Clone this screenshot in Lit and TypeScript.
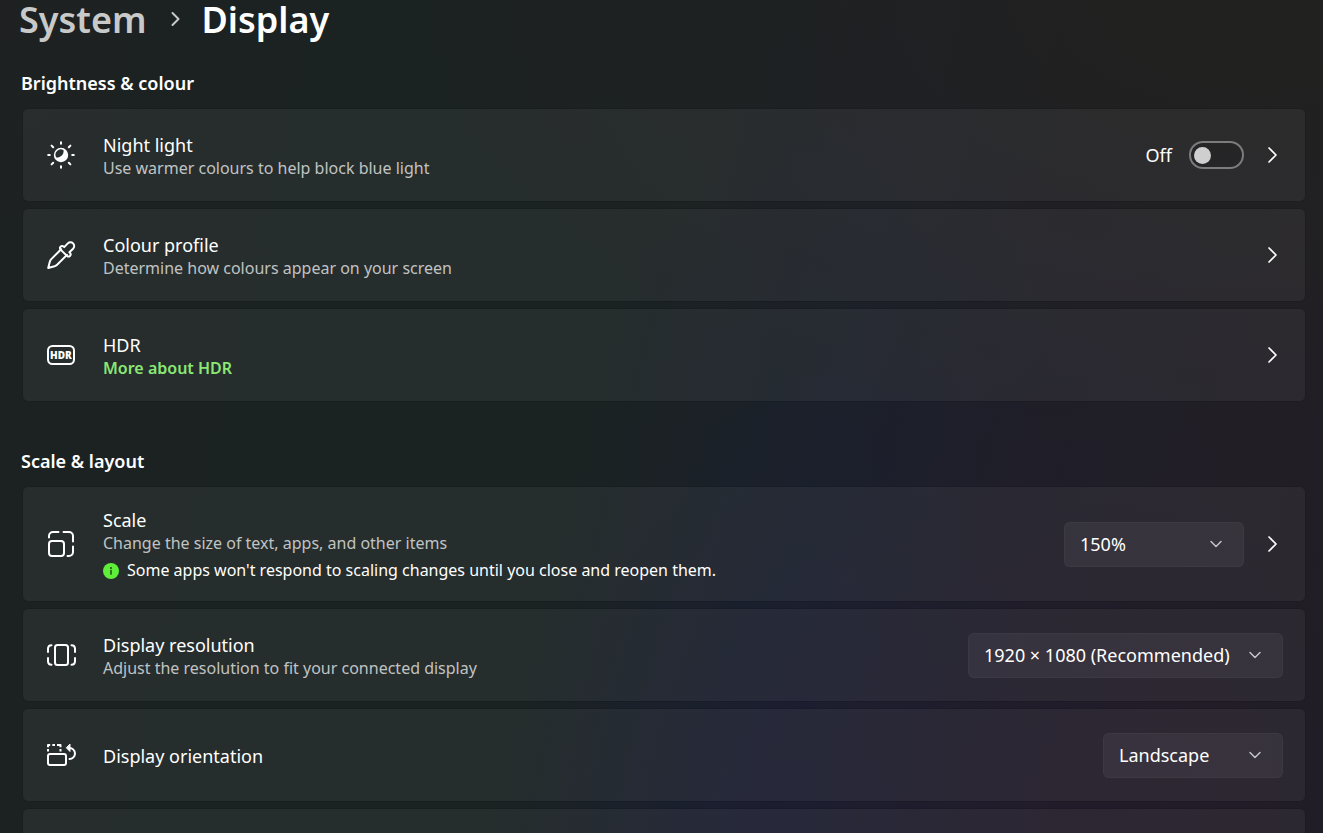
import { LitElement, html, svg, css, nothing } from "lit";
import { customElement, property, state } from "lit/decorators.js";

const icons = {
  night: svg`
    <g stroke="currentColor" stroke-width="2" stroke-linecap="round" fill="none">
      <path d="M15 2.200v1.600M15 26.200v1.600M2.200 15h1.600M26.200 15h1.600M5.600 5.600l1.600 1.600M22.800 22.800l1.600 1.600M5.600 24.400l1.600-1.600M22.800 7.200l1.600-1.600"/>
    </g>
    <circle cx="15" cy="15" r="7.200" fill="currentColor"/>
    <path fill="#27302f" d="M10.300 17.600a5.300 5.300 0 0 1 7.300-7.300c.4 4.400-3 7.500-7.300 7.300z"/>`,
  dropper: svg`
    <g stroke="currentColor" stroke-width="2" stroke-linejoin="round" stroke-linecap="round" fill="none">
      <path d="M15.200 9.200 5.300 19.100c-.7.700-1.200 1.600-1.500 2.600L2.200 28l6.300-1.700c1-.3 1.900-.8 2.600-1.500L21 14.900"/>
      <path d="M14.600 6.600c.9-.9 2.200-.9 3 0l.6.500 3.600-3.700a3.700 3.700 0 0 1 5.300 5.300l-3.700 3.600.6.600c.8.900.8 2.100 0 3-.9.800-2.100.8-3 0l-6.400-6.300c-.8-.9-.8-2.100 0-3z"/>
    </g>`,
  hdr: svg`
    <rect x="2" y="6" width="26" height="18" rx="4.500" fill="none" stroke="currentColor" stroke-width="2"/>
    <text x="15" y="18.700" text-anchor="middle" font-size="10" font-weight="900" fill="currentColor">HDR</text>`,
  scale: svg`
    <g stroke="currentColor" stroke-width="2" stroke-linecap="round" fill="none">
      <rect x="3" y="12" width="15" height="15" rx="3"/>
      <path d="M3 8.500V7a4 4 0 0 1 4-4h5.500M17.500 3H23a4 4 0 0 1 4 4v5.500M27 17.500V23a4 4 0 0 1-4 4h-1.500"/>
    </g>`,
  resolution: svg`
    <g stroke="currentColor" stroke-width="2" stroke-linecap="round" fill="none">
      <rect x="9" y="5" width="13" height="20" rx="2.500"/>
      <path d="M5.500 5.200a3.500 3.500 0 0 0-3.500 3.300v3.500M2 18v3.500a3.500 3.500 0 0 0 3.500 3.300M25.500 5.200a3.500 3.500 0 0 1 3.500 3.300v3.500M29 18v3.500a3.500 3.500 0 0 1-3.500 3.300"/>
    </g>`,
  orientation: svg`
    <g stroke="currentColor" stroke-width="2" stroke-linecap="round" stroke-linejoin="round" fill="none">
      <rect x="2" y="14" width="18" height="11" rx="2"/>
      <path stroke-linecap="butt" d="M2 11.500V9M2 7.200V5h2.200M6.300 5h2.700M11 5h3.500v2.200M14.500 9v2.500"/>
      <path d="M23 8h.5a5.200 5.200 0 0 1 0 11"/>
      <path fill="currentColor" stroke-width="1" d="M24 4.500v7L20.500 8z"/>
    </g>`,
};

type IconName = keyof typeof icons;

const chevronRight = html`<svg class="chevron" viewBox="0 0 22 22" aria-hidden="true">
  <path d="M8 4l7 7-7 7" />
</svg>`;

@customElement("settings-card")
class SettingsCard extends LitElement {
  @property() icon?: IconName;
  @property() heading = "";
  @property() note = "";
  @property() more = "";

  static styles = css`
    :host {
      display: flex;
      align-items: center;
      box-sizing: border-box;
      min-height: 94px;
      padding: 14px 22px 12px 23px;
      border: 1px solid rgba(0, 0, 0, 0.08);
      border-radius: 6px;
      background: rgba(255, 255, 255, 0.052);
      background-clip: padding-box;
    }
    .icon {
      flex: none;
      width: 30px;
      height: 30px;
      margin: 0 27px 2px 0;
      color: #fff;
    }
    .text {
      flex: 1;
      min-width: 0;
    }
    .heading {
      margin: 0;
      font-size: 18px;
      font-weight: 400;
      line-height: 24px;
    }
    .note {
      margin: 0;
      font-size: 16px;
      line-height: 23px;
      color: #c0c3c3;
    }
    .more {
      display: block;
      font-size: 16px;
      font-weight: 600;
      line-height: 23px;
      color: #8be774;
      text-decoration: none;
    }
    .controls {
      display: flex;
      align-items: center;
      gap: 17px;
      margin-bottom: 2px;
    }
  `;

  render() {
    return html`
      ${this.icon
        ? html`<svg class="icon" viewBox="0 0 30 30" aria-hidden="true">${icons[this.icon]}</svg>`
        : nothing}
      <div class="text">
        ${this.heading ? html`<h3 class="heading">${this.heading}</h3>` : nothing}
        ${this.note ? html`<p class="note">${this.note}</p>` : nothing}
        ${this.more ? html`<a class="more" href="#hdr">${this.more}</a>` : nothing}
        <slot name="extra"></slot>
      </div>
      <div class="controls"><slot></slot></div>
    `;
  }
}

@customElement("app-root")
class AppRoot extends LitElement {
  @state() private nightLight = false;

  static styles = css`
    :host {
      display: block;
      box-sizing: border-box;
      height: 100vh;
      overflow-y: auto;
      scrollbar-width: none;
      padding: 0 17px 0 22px;
      color: #fff;
      font-family: "Noto Sans", "Open Sans", sans-serif;
      background:
        radial-gradient(ellipse 65% 55% at 95% 0%, #212120 15%, rgba(33, 33, 32, 0)),
        radial-gradient(ellipse 15% 40% at 0% 0%, #1f2121, rgba(31, 33, 33, 0)),
        radial-gradient(ellipse 32% 45% at 82% 100%, rgba(35, 26, 44, 0.6), rgba(35, 26, 44, 0)),
        radial-gradient(ellipse 20% 55% at 60% 100%, rgba(26, 30, 52, 0.7), rgba(26, 30, 52, 0)),
        linear-gradient(104deg, #1b2221 0%, #1b2222 45%, #1b202b 61%, #1f1e29 74%, #211e26 88%, #201e24 100%);
    }
    .crumbs {
      display: flex;
      align-items: center;
      height: 40px;
      margin: 0 0 0 -3px;
      font-size: 36px;
      font-weight: 600;
      line-height: 40px;
    }
    .crumbs a {
      color: #c8caca;
      text-decoration: none;
    }
    .crumbs h1 {
      margin: 0;
      font: inherit;
    }
    .crumbs .chevron {
      width: 22px;
      height: 22px;
      margin: 0 16px 2px 17px;
      color: #c8caca;
      stroke-width: 2;
    }
    .section {
      display: flex;
      flex-direction: column;
      gap: 6px;
      margin-bottom: 46px;
    }
    .section h2 {
      margin: 0 0 6px -1px;
      font-size: 18px;
      font-weight: 600;
      line-height: 26px;
    }
    .first {
      margin-top: 30px;
    }
    .chevron {
      display: block;
      width: 22px;
      height: 22px;
      fill: none;
      stroke: currentColor;
      stroke-width: 1.7;
      stroke-linecap: round;
      stroke-linejoin: round;
    }
    .go {
      padding: 0;
      border: 0;
      color: #fff;
      background: none;
    }
    .switch {
      display: flex;
      align-items: center;
      gap: 17px;
      font-size: 18px;
      line-height: 26px;
    }
    .switch input {
      appearance: none;
      display: flex;
      align-items: center;
      box-sizing: border-box;
      width: 55px;
      height: 28px;
      margin: 0;
      padding: 0 3px;
      border: 2px solid #7c7c7e;
      border-radius: 14px;
      background: rgba(0, 0, 0, 0.12);
    }
    .switch input::before {
      content: "";
      width: 17px;
      height: 17px;
      border-radius: 50%;
      background: #cfcfcf;
    }
    .switch input:checked {
      justify-content: flex-end;
      border-color: #5fee3a;
    }
    .pick {
      display: grid;
      align-items: center;
    }
    .pick select,
    .pick svg {
      grid-area: 1 / 1;
    }
    .pick select {
      appearance: none;
      box-sizing: border-box;
      min-width: 180px;
      height: 45px;
      padding: 0 52px 0 15px;
      border: 1px solid rgba(255, 255, 255, 0.03);
      border-radius: 6px;
      color: #fff;
      font: inherit;
      font-size: 18px;
      background: rgba(255, 255, 255, 0.055);
    }
    .pick option {
      background: #2c2a36;
    }
    .pick svg {
      justify-self: end;
      width: 14px;
      height: 14px;
      margin-right: 21px;
      fill: none;
      stroke: #c4c4c8;
      stroke-width: 1.5;
      stroke-linecap: round;
      stroke-linejoin: round;
      pointer-events: none;
    }
    .hint {
      display: flex;
      align-items: center;
      gap: 8px;
      margin: 4px 0 0;
      font-size: 16px;
      line-height: 23px;
    }
    .hint svg {
      flex: none;
      width: 16px;
      height: 16px;
    }
    .scale {
      min-height: 116px;
    }
  `;

  private picker(label: string, options: string[]) {
    return html`<span class="pick">
      <select aria-label=${label}>
        ${options.map((o) => html`<option>${o}</option>`)}
      </select>
      <svg viewBox="0 0 14 14" aria-hidden="true"><path d="M2 4.500l5 5 5-5" /></svg>
    </span>`;
  }

  private go(label: string) {
    return html`<button class="go" type="button" aria-label=${label}>${chevronRight}</button>`;
  }

  render() {
    return html`
      <nav class="crumbs">
        <a href="#system">System</a>
        <svg class="chevron" viewBox="0 0 22 22" aria-hidden="true"><path d="M8.500 5l6 6-6 6" /></svg>
        <h1>Display</h1>
      </nav>

      <section class="section first">
        <h2>Brightness &amp; colour</h2>
        <settings-card icon="night" heading="Night light" note="Use warmer colours to help block blue light">
          <label class="switch">
            ${this.nightLight ? "On" : "Off"}
            <input
              type="checkbox"
              role="switch"
              .checked=${this.nightLight}
              @change=${(e: Event) => (this.nightLight = (e.target as HTMLInputElement).checked)}
            />
          </label>
          ${this.go("Night light")}
        </settings-card>
        <settings-card icon="dropper" heading="Colour profile" note="Determine how colours appear on your screen">
          ${this.go("Colour profile")}
        </settings-card>
        <settings-card icon="hdr" heading="HDR" more="More about HDR">${this.go("HDR")}</settings-card>
      </section>

      <section class="section">
        <h2>Scale &amp; layout</h2>
        <settings-card class="scale" icon="scale" heading="Scale" note="Change the size of text, apps, and other items">
          <p class="hint" slot="extra">
            <svg viewBox="0 0 16 16" aria-hidden="true">
              <circle cx="8" cy="8" r="8" fill="#5fee3a" />
              <circle cx="8" cy="5" r="0.900" fill="#17301a" />
              <path d="M8 7.500v3.700" stroke="#17301a" stroke-width="1.300" stroke-linecap="round" />
            </svg>
            Some apps won't respond to scaling changes until you close and reopen them.
          </p>
          ${this.picker("Scale", ["150%"])} ${this.go("Scale")}
        </settings-card>
        <settings-card
          icon="resolution"
          heading="Display resolution"
          note="Adjust the resolution to fit your connected display"
        >
          ${this.picker("Display resolution", ["1920 × 1080 (Recommended)"])}
        </settings-card>
        <settings-card icon="orientation" heading="Display orientation">
          ${this.picker("Display orientation", ["Landscape"])}
        </settings-card>
        <settings-card></settings-card>
      </section>
    `;
  }
}
